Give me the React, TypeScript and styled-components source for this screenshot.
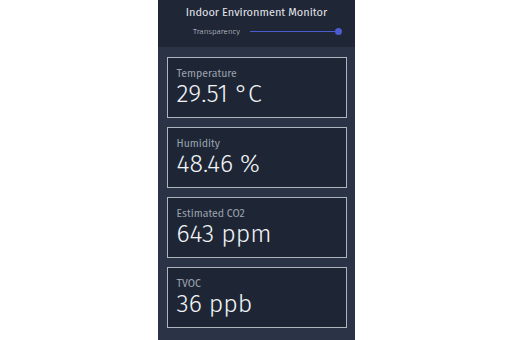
import React from "react";
import styled, { createGlobalStyle } from "styled-components";

const GlobalStyle = createGlobalStyle`
  html, body {
    margin: 0;
    padding: 0;
    background: #ffffff;
    font-family: "Fira Sans", "Open Sans", "Noto Sans", sans-serif;
  }
`;

const Panel = styled.div`
  width: 197px;
  height: 340px;
  margin: 0 auto;
  background: #2a3446;
  display: flex;
  flex-direction: column;
  overflow: hidden;
`;

const Header = styled.div`
  background: #1f2636;
  height: 47px;
  box-sizing: border-box;
  padding-top: 5px;
  display: flex;
  flex-direction: column;
  align-items: center;
`;

const Title = styled.div`
  color: #e2e5ea;
  font-size: 11px;
  line-height: 15px;
  padding-left: 1px;
`;

const SliderRow = styled.div`
  display: flex;
  align-items: center;
  gap: 10px;
  margin-top: 7px;
  padding-left: 20px;
`;

const SliderLabel = styled.div`
  color: #d0d4dc;
  font-size: 8px;
  font-weight: 300;
`;

const Track = styled.div`
  position: relative;
  width: 89px;
  height: 1.5px;
  background: #4b5bd0;
`;

const Knob = styled.div`
  position: absolute;
  right: -3px;
  top: -3px;
  width: 7px;
  height: 7px;
  border-radius: 50%;
  background: #4b5bd0;
`;

const Cards = styled.div`
  display: flex;
  flex-direction: column;
  gap: 9px;
  padding: 10px 8px 0 9px;
`;

const Card = styled.div`
  height: 61px;
  box-sizing: border-box;
  border: 1.5px solid #aeb5bd;
  background: #1e2636;
  padding: 9px 9px 0;
`;

const Label = styled.div`
  color: #9ca3ad;
  font-size: 10.5px;
  line-height: 13px;
`;

const Value = styled.div`
  color: #f2f4f6;
  font-size: 25px;
  font-weight: 300;
  line-height: 29px;
`;

const readings = [
  { label: "Temperature", value: "29.51 °C" },
  { label: "Humidity", value: "48.46 %" },
  { label: "Estimated CO2", value: "643 ppm" },
  { label: "TVOC", value: "36 ppb" },
];

const App = () => {
  return (
    <>
      <GlobalStyle />
      <Panel>
        <Header>
          <Title>Indoor Environment Monitor</Title>
          <SliderRow>
            <SliderLabel>Transparency</SliderLabel>
            <Track>
              <Knob />
            </Track>
          </SliderRow>
        </Header>
        <Cards>
          {readings.map((r) => (
            <Card key={r.label}>
              <Label>{r.label}</Label>
              <Value>{r.value}</Value>
            </Card>
          ))}
        </Cards>
      </Panel>
    </>
  );
};

export default App;
